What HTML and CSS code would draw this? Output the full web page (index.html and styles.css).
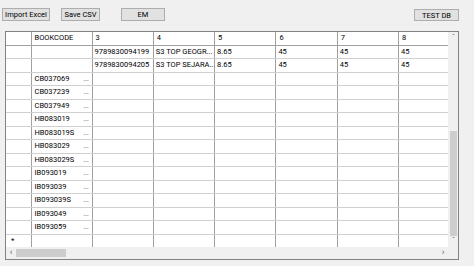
FILE: index.html
```html
<!DOCTYPE html>
<html lang="en">
<head>
    <meta charset="UTF-8">
    <title>Book Import</title>
    <link rel="stylesheet" href="styles.css">
</head>
<body>
    <div class="form">
        <!-- toolbar buttons -->
        <div class="toolbar">
            <button class="btn btn-import">Import Excel</button>
            <button class="btn btn-save">Save CSV</button>
            <button class="btn btn-em">EM</button>
            <button class="btn btn-test">TEST DB</button>
        </div>

        <!-- data grid -->
        <div class="grid">
            <div class="grid-body">
                <table class="data">
                    <colgroup>
                        <col class="c-head"><col class="c-code"><col class="c-w"><col class="c-w"><col class="c-w"><col class="c-w"><col class="c-w"><col class="c-w">
                    </colgroup>
                    <thead>
                        <tr>
                            <th></th><th>BOOKCODE</th><th>3</th><th>4</th><th>5</th><th>6</th><th>7</th><th>8</th>
                        </tr>
                    </thead>
                    <tbody id="rows"></tbody>
                </table>
            </div>
            <div class="vscroll">
                <div class="arrow">&#710;</div>
                <div class="track"><div class="thumb"></div></div>
                <div class="arrow down">&#711;</div>
            </div>
            <div class="hscroll">
                <div class="arrow">&lsaquo;</div>
                <div class="htrack"><div class="hthumb"></div></div>
                <div class="arrow">&rsaquo;</div>
            </div>
            <div class="corner"></div>
        </div>
    </div>

    <script>
        const items = [
            ["", "9789830094199", "S3 TOP GEOGR...", "8.65", "45", "45", "45"],
            ["", "9789830094205", "S3 TOP SEJARA...", "8.65", "45", "45", "45"]
        ];
        const codes = ["CB037069", "CB037239", "CB037949", "HB083019", "HB083019S", "HB083029",
            "HB083029S", "IB093019", "IB093039", "IB093039S", "IB093049", "IB093059"];

        const body = document.getElementById('rows');

        // rows with data
        items.forEach(item => {
            const row = body.insertRow();
            row.insertCell();
            item.forEach(v => { row.insertCell().textContent = v; });
        });

        // rows with only a bookcode
        codes.forEach(code => {
            const row = body.insertRow();
            row.insertCell();
            const cell = row.insertCell();
            cell.innerHTML = '<span class="code">' + code + '</span><span class="dots">...</span>';
            for (let i = 0; i < 6; i++) row.insertCell();
        });

        // new row
        const last = body.insertRow();
        last.className = 'new-row';
        last.insertCell().textContent = '*';
        for (let i = 0; i < 7; i++) last.insertCell();
    </script>
</body>
</html>
```

FILE: styles.css
```css
* {
    box-sizing: border-box;
}
body {
    margin: 0;
    background-color: #f0f0f0;
    font-family: Roboto, "Liberation Sans", sans-serif;
    font-size: 7.5px;
    color: #000;
}
.form {
    width: 474px;
    height: 266px;
    padding: 8px 15px 0 2px;
}
.toolbar {
    display: flex;
    align-items: flex-start;
    height: 23px;
}
.btn {
    font-family: inherit;
    font-size: 7.5px;
    height: 13px;
    padding: 0;
    margin: 0;
    border: 1px solid #adadad;
    background-color: #e1e1e1;
    color: #000;
    line-height: 11px;
}
.btn-import {
    width: 48px;
}
.btn-save {
    width: 39px;
    margin-left: 11px;
}
.btn-em {
    width: 44px;
    margin-left: 21px;
}
.btn-test {
    width: 45px;
    margin-left: auto;
    margin-top: 1px;
    height: 12px;
}
.grid {
    margin-left: 3px;
    width: 454px;
    height: 229px;
    border: 1px solid #828282;
    background-color: #fff;
    display: grid;
    grid-template-columns: 442px 10px;
    grid-template-rows: 215px 12px;
}
.grid-body {
    overflow: hidden;
}
.data {
    border-collapse: collapse;
    table-layout: fixed;
    width: 454px;
}
.c-head {
    width: 25px;
}
.c-code {
    width: 61px;
}
.c-w {
    width: 61.3px;
}
th, td {
    height: 13px;
    padding: 0 0 0 2px;
    text-align: left;
    font-weight: normal;
    white-space: nowrap;
    overflow: hidden;
    border-right: 1px solid #a0a0a0;
    border-bottom: 1px solid #d0d0d0;
    line-height: 12px;
}
tbody tr:nth-child(even) td {
    height: 14px;
}
th {
    height: 13px;
    padding-left: 3px;
    border-bottom: 1px solid #a0a0a0;
}
td .code {
    display: inline-block;
    width: 50px;
    padding-left: 1px;
}
td .dots {
    font-size: 6.5px;
    color: #444;
}
.new-row td {
    border-bottom: 1px solid #a0a0a0;
}
.new-row td:first-child {
    padding-left: 5px;
    font-size: 8px;
}
.vscroll {
    background-color: #f0f0f0;
    display: flex;
    flex-direction: column;
    border-left: 1px solid #f0f0f0;
}
.vscroll .arrow {
    height: 11px;
    font-size: 8px;
    line-height: 12px;
    text-align: center;
    color: #606060;
}
.vscroll .arrow.down {
    line-height: 9px;
}
.track {
    flex: 1;
    display: flex;
    flex-direction: column;
    justify-content: flex-end;
}
.thumb {
    height: 105px;
    margin: 0 1px;
    background-color: #cdcdcd;
}
.hscroll {
    background-color: #f0f0f0;
    display: flex;
    align-items: stretch;
}
.hscroll .arrow {
    width: 10px;
    font-size: 9px;
    line-height: 11px;
    text-align: center;
    color: #606060;
}
.htrack {
    flex: 1;
    padding: 2px 0;
}
.hthumb {
    width: 50px;
    height: 100%;
    background-color: #cdcdcd;
}
.corner {
    background-color: #f0f0f0;
}
```
